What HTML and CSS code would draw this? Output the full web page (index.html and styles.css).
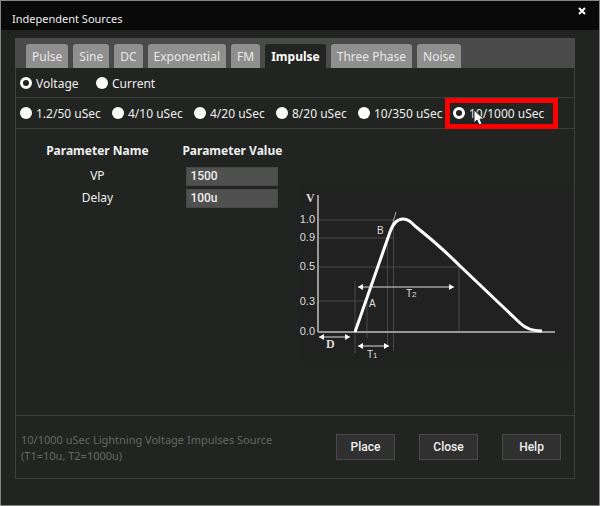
FILE: index.html
```
<!DOCTYPE html>
<html lang="en">
<head>
    <meta charset="UTF-8">
    <meta name="viewport" content="width=device-width, initial-scale=1.0">
    <title>Independent Sources</title>
    <link rel="stylesheet" href="styles.css">
</head>
<body>

    <div class="window">
        <!-- Title Bar -->
        <header class="title-bar">
            <h1>Independent Sources</h1>
            <button type="button" class="close-button" aria-label="Close window">
                <svg width="8" height="8" viewBox="0 0 8 8"><path d="M1 1L7 7M7 1L1 7"/></svg>
            </button>
        </header>

        <main class="panel">
            <!-- Tabs -->
            <nav class="tabs">
                <button type="button">Pulse</button>
                <button type="button">Sine</button>
                <button type="button">DC</button>
                <button type="button">Exponential</button>
                <button type="button">FM</button>
                <button type="button" class="active">Impulse</button>
                <button type="button">Three Phase</button>
                <button type="button">Noise</button>
            </nav>

            <div class="source-row">
                <label><input type="radio" name="source" checked>Voltage</label>
                <label><input type="radio" name="source">Current</label>
            </div>

            <div class="wave-row">
                <label><input type="radio" name="wave">1.2/50 uSec</label>
                <label><input type="radio" name="wave">4/10 uSec</label>
                <label><input type="radio" name="wave">4/20 uSec</label>
                <label><input type="radio" name="wave">8/20 uSec</label>
                <label><input type="radio" name="wave">10/350 uSec</label>
                <label class="highlight"><input type="radio" name="wave" checked>10/1000 uSec
                    <svg class="cursor" width="12" height="17" viewBox="0 0 12 17"><path d="M1 1V14L4 11L6 16L9 15L7 10H11Z"/></svg>
                </label>
            </div>

            <div class="content">
                <table class="params">
                    <thead>
                        <tr><th>Parameter Name</th><th>Parameter Value</th></tr>
                    </thead>
                    <tbody>
                        <tr>
                            <td><label for="vp">VP</label></td>
                            <td><input type="text" id="vp" value="1500"></td>
                        </tr>
                        <tr>
                            <td><label for="delay">Delay</label></td>
                            <td><input type="text" id="delay" value="100u"></td>
                        </tr>
                    </tbody>
                </table>

                <!-- Impulse waveform -->
                <svg class="chart" width="272" height="177" viewBox="0 0 272 177">
                    <defs>
                        <marker id="arrow" markerUnits="userSpaceOnUse" markerWidth="6" markerHeight="6" refX="5" refY="3" orient="auto-start-reverse">
                            <path d="M0 0L5 3L0 6Z" fill="#fff"/>
                        </marker>
                    </defs>
                    <path class="guide" d="M20 36H96M20 54H95M20 83H161M20 117H69M57 97V169M69 115V154M89.5 60V163M95.5 38V167M161 83V148"/>
                    <path class="axis" d="M20 11V148M20 148H257"/>
                    <path class="tangent" d="M94 42L98 28"/>
                    <path class="wave" d="M57 148L92 48C95 39 99 35 105 35C110 35 113 38 117 42C132 54 147 67 161 81L222 139C228 145 234 147 244 147"/>
                    <g class="arrows">
                        <path d="M21 153H52"/>
                        <path d="M60 162H91"/>
                        <path d="M60 103H156"/>
                    </g>
                    <g class="scale">
                        <text x="17" y="39">1.0</text>
                        <text x="17" y="57">0.9</text>
                        <text x="17" y="86">0.5</text>
                        <text x="17" y="121">0.3</text>
                        <text x="17" y="151">0.0</text>
                    </g>
                    <g class="names">
                        <text x="79" y="50">B</text>
                        <text x="71" y="123">A</text>
                        <text x="108" y="113">T<tspan class="sub">2</tspan></text>
                        <text x="69" y="174">T<tspan class="sub">1</tspan></text>
                    </g>
                    <g class="serif">
                        <text x="8" y="18">V</text>
                        <text x="28" y="164">D</text>
                    </g>
                </svg>
            </div>

            <!-- Footer -->
            <footer class="footer">
                <p>10/1000 uSec Lightning Voltage Impulses Source<br>(T1=10u, T2=1000u)</p>
                <div class="buttons">
                    <button type="button">Place</button>
                    <button type="button">Close</button>
                    <button type="button">Help</button>
                </div>
            </footer>
        </main>
    </div>

</body>
</html>
```
FILE: styles.css
```
/* General Styles */
* {
    box-sizing: border-box;
}
body {
    margin: 0;
    font-family: "Noto Sans", "Open Sans", sans-serif;
    font-size: 12px;
    line-height: 16px;
    color: #eee;
    background-color: #222422;
}
button, input {
    font-family: inherit;
    font-size: inherit;
    color: inherit;
    margin: 0;
}
.window {
    display: flex;
    flex-direction: column;
    min-height: 100vh;
    border: 1px solid #858585;
}

/* Title Bar */
.title-bar {
    display: flex;
    justify-content: space-between;
    height: 29px;
    padding: 0 13px 0 11px;
    background-color: #090909;
}
.title-bar h1 {
    margin: 10px 0 0;
    font-size: 11px;
    line-height: 16px;
    font-weight: 400;
}
.close-button {
    display: flex;
    align-items: center;
    height: 20px;
    padding: 0;
    background: none;
    border: none;
}
.close-button path {
    stroke: #fff;
    stroke-width: 2;
}

/* Panel */
.panel {
    display: flex;
    flex-direction: column;
    flex: 1;
    margin: 8px 24px 26px 14px;
    border: 1px solid #3d3f3d;
}

/* Tabs */
.tabs {
    display: flex;
    gap: 5px;
    margin: -1px -1px 0;
    padding: 6px 11px 0;
    background-color: #4a4a4a;
}
.tabs button {
    height: 24px;
    padding: 1px 6px 0;
    border: none;
    border-radius: 3px 3px 0 0;
    background-color: #8f8f8f;
    color: #e8e8e8;
    white-space: nowrap;
}
.tabs .active {
    background-color: #222422;
    color: #fff;
    font-weight: bold;
}

/* Radio rows */
.source-row, .wave-row {
    display: grid;
    align-items: center;
    padding: 2px 4px 0;
    border-bottom: 1px solid #3d3f3d;
}
.source-row {
    grid-template-columns: 76px auto;
    justify-content: start;
    height: 30px;
}
.wave-row {
    grid-template-columns: 92px 82px 82px 82px 95px auto;
    justify-content: start;
    height: 31px;
}
.source-row label, .wave-row label {
    display: flex;
    align-items: center;
    gap: 4px;
    white-space: nowrap;
}
input[type="radio"] {
    appearance: none;
    width: 12px;
    height: 12px;
    margin-bottom: 2px;
    border-radius: 50%;
    background-color: #fff;
}
input[type="radio"]:checked {
    border: 3px solid #fff;
    background-color: #222;
}
.wave-row .highlight {
    position: relative;
}
.highlight::after {
    content: "";
    position: absolute;
    inset: -8px -14px -7px -8px;
    border: 5px solid #f00;
}
.cursor {
    position: absolute;
    z-index: 1;
    left: 20px;
    top: 3px;
    fill: #fff;
    stroke: #222;
}

/* Parameters and chart */
.content {
    display: flex;
    flex: 1;
    align-items: flex-start;
    padding: 14px 4px 52px 20px;
}
.params {
    border-collapse: collapse;
    text-align: center;
}
.params th {
    height: 22px;
    padding: 0 0 6px;
    width: 126px;
    white-space: nowrap;
}
.params th + th {
    width: 144px;
    padding-left: 8px;
}
.params td {
    height: 22px;
    padding: 0;
}
.params td + td {
    padding-left: 8px;
}
.params input {
    display: block;
    width: 92px;
    height: 19px;
    margin: 0 auto;
    padding: 0 3px;
    border: 1px solid #484848;
    background-color: #505050;
    font-family: Roboto, sans-serif;
    font-weight: 500;
}
.chart {
    flex: none;
    margin: 41px 0 0 auto;
    background-color: #212121;
}
.chart path {
    fill: none;
}
.chart marker path {
    fill: #fff;
}
.chart .guide {
    stroke: #484848;
}
.chart .axis {
    stroke: #999;
    stroke-width: 2;
}
.chart .tangent {
    stroke: #aaa;
}
.chart .wave {
    stroke: #fff;
    stroke-width: 3;
}
.chart .arrows path {
    stroke: #ddd;
    marker-start: url(#arrow);
    marker-end: url(#arrow);
}
.chart text {
    font-family: "Liberation Sans", Arial, sans-serif;
    font-size: 10px;
    fill: #ddd;
}
.chart .scale text {
    font-size: 11px;
    text-anchor: end;
}
.chart .sub {
    font-size: 8px;
}
.chart .serif text {
    font-family: "Liberation Serif", serif;
    font-size: 12px;
    font-weight: bold;
}

/* Footer */
.footer {
    display: flex;
    justify-content: space-between;
    align-items: center;
    height: 63px;
    padding: 0 13px 0 5px;
    border-top: 1px solid #3d3f3d;
}
.footer p {
    margin: 2px 0 0;
    font-size: 11px;
    color: #666;
}
.buttons {
    display: flex;
    gap: 24px;
}
.buttons button {
    width: 59px;
    height: 26px;
    padding: 0;
    border: 1px solid #4a4a4a;
    background-color: #303030;
    font-family: Roboto, sans-serif;
    font-weight: 500;
}
```
